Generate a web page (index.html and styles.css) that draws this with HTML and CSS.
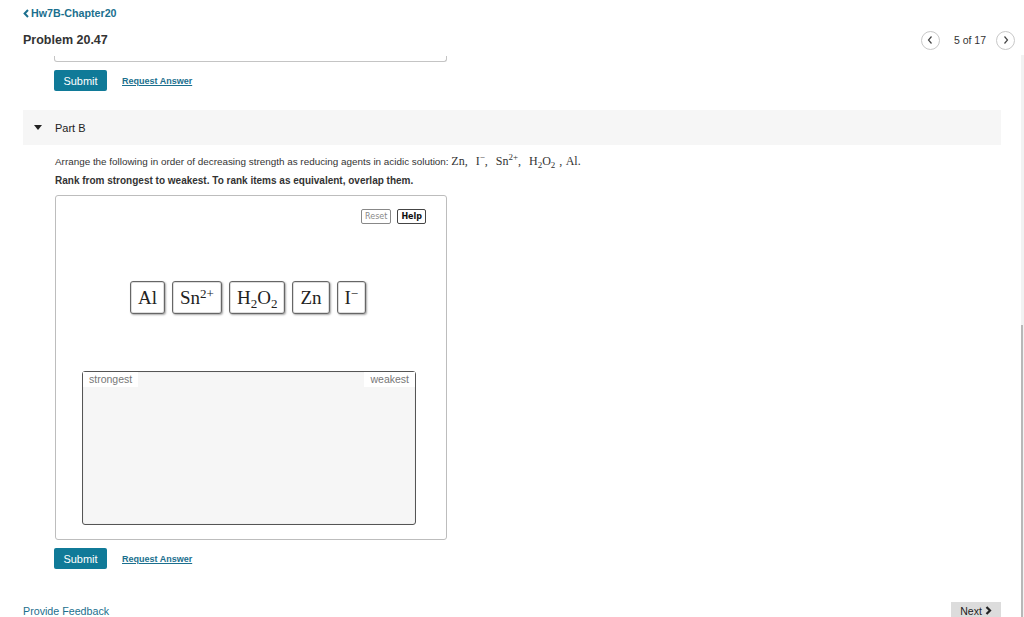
FILE: index.html
```html
<!DOCTYPE html>
<html>
<head>
<meta charset="utf-8">
<link rel="stylesheet" href="styles.css">
</head>
<body>
<div class="page">
  <header class="top">
    <a class="back"><svg class="chev" width="6" height="9" viewBox="0 0 6 9"><path d="M5 1 L1.6 4.5 L5 8" fill="none" stroke="#1b6f8e" stroke-width="2"/></svg>Hw7B-Chapter20</a>
    <div class="title-row">
      <h1>Problem 20.47</h1>
      <div class="pager">
        <span class="circ"><svg width="8" height="10" viewBox="0 0 8 10"><path d="M5.5 1.5 L2.5 5 L5.5 8.5" fill="none" stroke="#444" stroke-width="1.2"/></svg></span>
        <span class="count">5 of 17</span>
        <span class="circ"><svg width="8" height="10" viewBox="0 0 8 10"><path d="M2.5 1.5 L5.5 5 L2.5 8.5" fill="none" stroke="#444" stroke-width="1.2"/></svg></span>
      </div>
    </div>
  </header>

  <div class="indent">
    <div class="prev-input"></div>
    <div class="actions first">
      <button class="submit">Submit</button>
      <a class="req">Request Answer</a>
    </div>
  </div>

  <div class="part-head">
    <span class="tri"></span>
    <span class="part-label">Part B</span>
  </div>

  <div class="part-body">
    <p class="prompt">Arrange the following in order of decreasing strength as reducing agents in acidic solution: <span class="m">Zn,&nbsp; I<sup>&minus;</sup>,&nbsp; Sn<sup>2+</sup>,&nbsp; H<sub>2</sub>O<sub>2</sub> , Al.</span></p>
    <p class="instr">Rank from strongest to weakest. To rank items as equivalent, overlap them.</p>

    <div class="widget">
      <div class="tools">
        <button class="tool reset">Reset</button>
        <button class="tool help">Help</button>
      </div>
      <div class="tiles">
        <span class="tile"><span class="tx">Al</span></span>
        <span class="tile"><span class="tx">Sn<sup>2+</sup></span></span>
        <span class="tile"><span class="tx">H<sub>2</sub>O<sub>2</sub></span></span>
        <span class="tile"><span class="tx">Zn</span></span>
        <span class="tile"><span class="tx">I<sup>&minus;</sup></span></span>
      </div>
      <div class="rank">
        <div class="rank-labels">
          <span class="lbl">strongest</span>
          <span class="lbl">weakest</span>
        </div>
      </div>
    </div>

    <div class="actions second">
      <button class="submit">Submit</button>
      <a class="req">Request Answer</a>
    </div>
  </div>

  <footer class="foot">
    <a class="feedback">Provide Feedback</a>
    <button class="next">Next <svg width="7" height="9" viewBox="0 0 7 9"><path d="M1.5 1 L5 4.5 L1.5 8" fill="none" stroke="#222" stroke-width="2.2"/></svg></button>
  </footer>
</div>
<div class="sbar"><div class="thumb"></div></div>
</body>
</html>
```
FILE: styles.css
```css
html, body {
  margin: 0;
  padding: 0;
  background: #fff;
  font-family: "Liberation Sans", Arial, sans-serif;
  color: #333;
  overflow: hidden;
}
.page {
  width: 1001px;
  padding-left: 23px;
  height: 617px;
  position: relative;
  display: flex;
  flex-direction: column;
}
.top {
  padding-top: 6px;
}
.back {
  display: flex;
  align-items: center;
  gap: 1px;
  font-size: 10.7px;
  font-weight: bold;
  color: #1b6f8e;
  height: 14px;
  line-height: 14px;
}
.chev { margin-right: 1px; }
.title-row {
  display: flex;
  justify-content: space-between;
  align-items: center;
  margin-top: 10px;
  height: 20px;
  width: 994px;
}
h1 {
  margin: 0;
  font-size: 12.5px;
  font-weight: bold;
  color: #333;
}
.pager {
  display: flex;
  align-items: center;
  margin-right: 2px;
}
.circ {
  width: 17px;
  height: 17px;
  border: 1px solid #c8c8c8;
  border-radius: 50%;
  display: flex;
  align-items: center;
  justify-content: center;
}
.count {
  font-size: 10.5px;
  color: #333;
  margin: 0 10px 0 14px;
}
.indent {
  padding-left: 31px;
}
.prev-input {
  width: 391px;
  height: 5px;
  margin-top: 6px;
  border: 1px solid #c4c4c4;
  border-top: none;
  border-radius: 0 0 3px 3px;
}
.actions {
  display: flex;
  align-items: center;
  gap: 15px;
}
.actions.first {
  margin-top: 8px;
}
.submit {
  width: 53px;
  height: 21px;
  background: #107a98;
  color: #fff;
  border: none;
  border-radius: 2px;
  font-family: "Liberation Sans", Arial, sans-serif;
  font-size: 11px;
  padding: 0;
}
.req {
  font-size: 9px;
  font-weight: bold;
  color: #1b6f8e;
  text-decoration: underline;
}
.part-head {
  margin-top: 19px;
  width: 978px;
  height: 35px;
  background: #f6f6f6;
  display: flex;
  align-items: center;
}
.tri {
  width: 0;
  height: 0;
  border-left: 4px solid transparent;
  border-right: 4px solid transparent;
  border-top: 5px solid #222;
  margin-left: 11px;
  margin-right: 13px;
}
.part-label {
  font-size: 11px;
  color: #222;
}
.part-body {
  padding-left: 32px;
}
.prompt {
  margin: 9px 0 0 0;
  font-size: 9.9px;
  color: #333;
  height: 14px;
  line-height: 14px;
  white-space: nowrap;
}
.m {
  font-family: "Liberation Serif", "Times New Roman", serif;
  font-size: 12px;
  word-spacing: 1px;
}
.m sup, .m sub { font-size: 9px; line-height: 0; }
.instr {
  margin: 6px 0 0 0;
  font-size: 10px;
  font-weight: bold;
  color: #333;
  height: 14px;
  line-height: 14px;
}
.widget {
  margin-top: 7px;
  width: 390px;
  height: 343px;
  border: 1px solid #bdbdbd;
  border-radius: 3px;
  display: flex;
  flex-direction: column;
}
.tools {
  display: flex;
  justify-content: flex-end;
  gap: 6px;
  padding: 13px 20px 0 0;
}
.tool {
  height: 15px;
  padding: 0 3px;
  border: 1px solid #777;
  border-radius: 2px;
  background: #fff;
  font-family: "DejaVu Sans", Verdana, sans-serif;
  font-size: 8px;
  line-height: 12px;
}
.reset { color: #888; border-color: #888; }
.help { color: #111; font-weight: bold; border-color: #444; }
.tiles {
  display: flex;
  gap: 7px;
  margin-top: 57px;
  padding-left: 74px;
}
.tile {
  height: 31px;
  padding: 0 7px;
  border: 1px solid #666;
  border-radius: 3px;
  box-shadow: 1px 1px 2px rgba(0,0,0,0.35), inset 0 0 0 1px #ddd;
  background: #fff;
  font-family: "Liberation Serif", "Times New Roman", serif;
  font-size: 19px;
  color: #222;
  display: flex;
  align-items: center;
}
.tx { line-height: 1; }
.tile sup { font-size: 13px; line-height: 0; vertical-align: 6px; }
.tile sub { font-size: 13px; line-height: 0; vertical-align: -4px; }
.rank {
  margin: 57px 0 0 26px;
  width: 332px;
  height: 152px;
  border: 1px solid #555;
  border-radius: 3px;
  background: #f6f6f6;
  box-shadow: inset 0 0 1px #ccc;
}
.rank-labels {
  display: flex;
  justify-content: space-between;
}
.lbl {
  background: #fff;
  font-size: 10.5px;
  color: #777;
  padding: 1px 6px 2px 6px;
}
.actions.second {
  margin-top: 8px;
  margin-left: -1px;
}
.foot {
  margin-top: auto;
  display: flex;
  justify-content: space-between;
  align-items: flex-end;
  width: 978px;
}
.feedback {
  font-size: 10.7px;
  color: #1b6f8e;
  margin-bottom: 0;
}
.next {
  width: 50px;
  height: 15px;
  background: #dcdcdc;
  border: none;
  padding: 2px 0 0 0;
  font-family: "Liberation Sans", Arial, sans-serif;
  font-size: 10.5px;
  color: #222;
  display: flex;
  align-items: center;
  justify-content: center;
  gap: 3px;
}
.sbar {
  position: fixed;
  right: 0;
  top: 55px;
  bottom: 0;
  width: 3px;
  background: #f2f2f2;
  display: flex;
  flex-direction: column;
  justify-content: flex-end;
}
.thumb {
  height: 292px;
  width: 2px;
  background: #b8b8b8;
}
```
